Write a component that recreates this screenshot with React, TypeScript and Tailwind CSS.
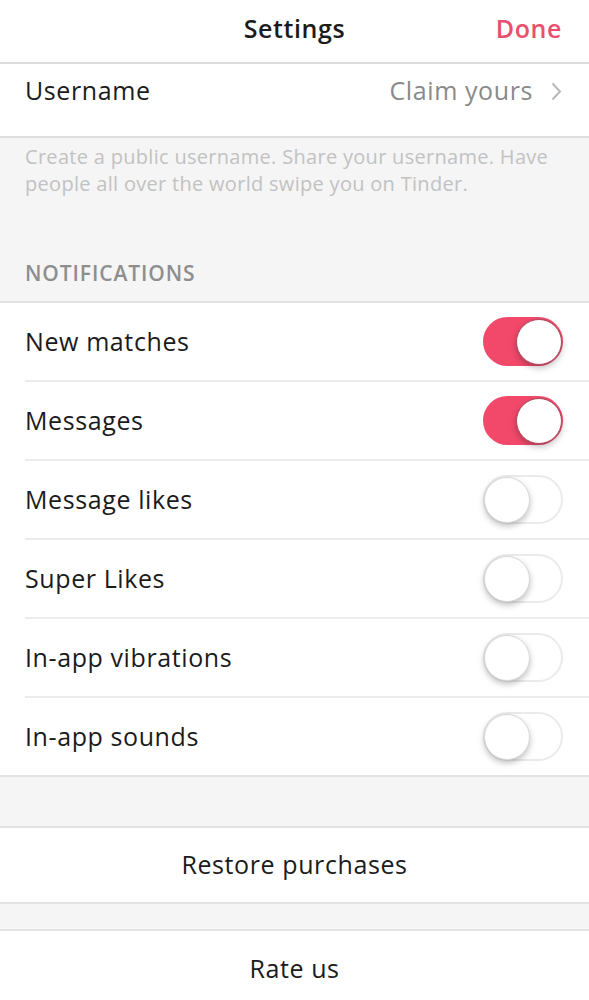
import { useState } from "react";

const font = { fontFamily: '"Open Sans", "Noto Sans", sans-serif' };

function Toggle({ on, onClick }: { on: boolean; onClick: () => void }) {
  return (
    <button
      onClick={onClick}
      className={`relative h-[49px] w-[80px] shrink-0 rounded-full transition ${
        on ? "bg-[#f2496b]" : "border-2 border-[#ebebeb] bg-white"
      }`}
    >
      <span
        className={`absolute top-1/2 h-[46px] w-[46px] -translate-y-1/2 rounded-full bg-white ${
          on
            ? "right-[1px] border border-[#a84a5c] shadow-[0_3px_6px_rgba(0,0,0,0.25)]"
            : "left-[-1px] border border-[#d8d8d8] shadow-[0_3px_6px_rgba(0,0,0,0.25)]"
        }`}
      />
    </button>
  );
}

export default function App() {
  const [toggles, setToggles] = useState([
    { label: "New matches", on: true },
    { label: "Messages", on: true },
    { label: "Message likes", on: false },
    { label: "Super Likes", on: false },
    { label: "In-app vibrations", on: false },
    { label: "In-app sounds", on: false },
  ]);

  const flip = (i: number) =>
    setToggles((t) => t.map((x, j) => (j === i ? { ...x, on: !x.on } : x)));

  return (
    <div
      className="min-h-screen w-[589px] bg-[#f5f5f5] text-[25px] tracking-[0.6px] text-[#1b1b1b]"
      style={font}
    >
      <header className="relative flex h-[64px] items-center justify-center border-b-2 border-[#dcdcdc] bg-white pb-[4px]">
        <h1 className="font-semibold">Settings</h1>
        <button className="absolute right-[27px] top-[10px] font-semibold text-[#e8506e]">
          Done
        </button>
      </header>

      <div className="flex h-[74px] items-center justify-between border-b-2 border-[#dedede] bg-white pb-[18px] pl-[25px] pr-[27px]">
        <span>Username</span>
        <span className="flex items-center gap-[18px] text-[#8a8a8a]">
          Claim yours
          <svg width="11" height="19" viewBox="0 0 11 19" fill="none" stroke="#b8b8b8" strokeWidth="2">
            <path d="M1.5 1.5 9 9.5 1.5 17.5" />
          </svg>
        </span>
      </div>

      <div className="h-[163px] px-[25px] pt-[5px]">
        <p className="w-[545px] text-[20px] leading-[27px] tracking-[0.3px] text-[#c2c2c2]">
          Create a public username. Share your username. Have people all over
          the world swipe you on Tinder.
        </p>
        <h2 className="mt-[61px] text-[21px] font-semibold tracking-[0.9px] text-[#8e8e8e]">
          NOTIFICATIONS
        </h2>
      </div>

      <div className="border-y-2 border-[#e3e3e3] bg-white">
        {toggles.map((t, i) => {
          const last = i === toggles.length - 1;
          return (
            <div key={t.label} className="pl-[25px]">
              <div
                className={`flex items-center justify-between pr-[26px] ${
                  last ? "h-[77px]" : "h-[79px] border-b-2 border-[#ececec]"
                }`}
              >
                <span>{t.label}</span>
                <Toggle on={t.on} onClick={() => flip(i)} />
              </div>
            </div>
          );
        })}
      </div>

      <div className="h-[49px]" />

      <button className="flex h-[78px] w-full items-center justify-center border-y-2 border-[#e3e3e3] bg-white">
        Restore purchases
      </button>

      <div className="h-[25px]" />

      <button className="flex h-[78px] w-full items-center justify-center border-t-2 border-[#e3e3e3] bg-white">
        Rate us
      </button>
    </div>
  );
}
